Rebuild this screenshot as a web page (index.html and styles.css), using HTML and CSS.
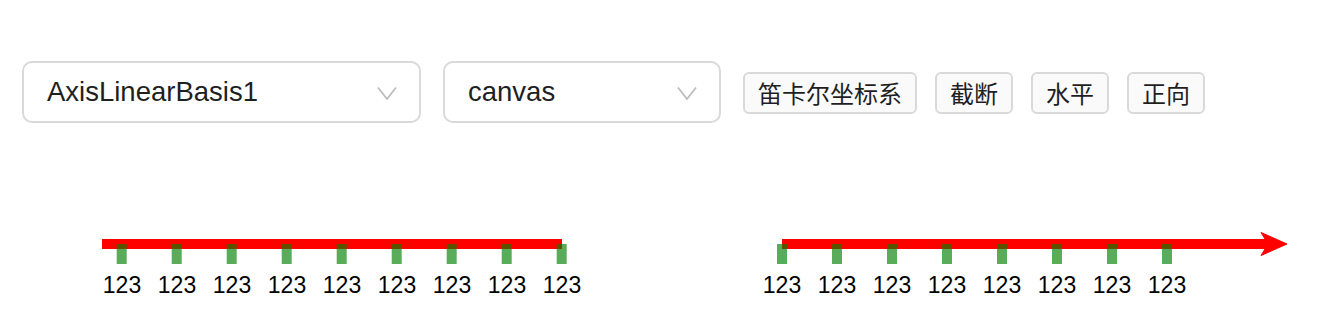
FILE: index.html
```html
<!DOCTYPE html>
<html lang="zh">
<head>
<meta charset="utf-8">
<link rel="stylesheet" href="styles.css">
</head>
<body>
<div class="toolbar">
  <div class="select select-wide">
    <span class="select-value">AxisLinearBasis1</span>
    <svg class="chevron" width="20" height="14" viewBox="0 0 20 14"><polyline points="1,1.5 10,13 19,1.5" fill="none" stroke="#bdbdbd" stroke-width="1.8"/></svg>
  </div>
  <div class="select select-narrow">
    <span class="select-value">canvas</span>
    <svg class="chevron" width="20" height="14" viewBox="0 0 20 14"><polyline points="1,1.5 10,13 19,1.5" fill="none" stroke="#bdbdbd" stroke-width="1.8"/></svg>
  </div>
  <div class="buttons">
    <button class="btn">笛卡尔坐标系</button>
    <button class="btn">截断</button>
    <button class="btn">水平</button>
    <button class="btn">正向</button>
  </div>
</div>
<svg class="axes" width="1330" height="332" viewBox="0 0 1330 332">
  <g class="axis-left">
    <rect x="102" y="239" width="460" height="10" fill="#ff0000"/>
    <g fill="#008000" fill-opacity="0.65">
      <rect x="116.7" y="244" width="10" height="20"/>
      <rect x="171.7" y="244" width="10" height="20"/>
      <rect x="226.7" y="244" width="10" height="20"/>
      <rect x="281.7" y="244" width="10" height="20"/>
      <rect x="336.7" y="244" width="10" height="20"/>
      <rect x="391.7" y="244" width="10" height="20"/>
      <rect x="446.7" y="244" width="10" height="20"/>
      <rect x="501.7" y="244" width="10" height="20"/>
      <rect x="556.7" y="244" width="10" height="20"/>
    </g>
    <g class="labels" text-anchor="middle">
      <text x="122" y="293">123</text>
      <text x="177" y="293">123</text>
      <text x="232" y="293">123</text>
      <text x="287" y="293">123</text>
      <text x="342" y="293">123</text>
      <text x="397" y="293">123</text>
      <text x="452" y="293">123</text>
      <text x="507" y="293">123</text>
      <text x="562" y="293">123</text>
    </g>
  </g>
  <g class="axis-right">
    <rect x="782" y="239" width="484" height="10" fill="#ff0000"/>
    <polygon points="1261,232.5 1287,244 1261,255.5 1265,249 1265,239" fill="#ff0000" stroke="#ff0000" stroke-width="1" stroke-linejoin="round"/>
    <g fill="#008000" fill-opacity="0.65">
      <rect x="777" y="244" width="10" height="20"/>
      <rect x="832" y="244" width="10" height="20"/>
      <rect x="887" y="244" width="10" height="20"/>
      <rect x="942" y="244" width="10" height="20"/>
      <rect x="997" y="244" width="10" height="20"/>
      <rect x="1052" y="244" width="10" height="20"/>
      <rect x="1107" y="244" width="10" height="20"/>
      <rect x="1162" y="244" width="10" height="20"/>
    </g>
    <g class="labels" text-anchor="middle">
      <text x="782" y="293">123</text>
      <text x="837" y="293">123</text>
      <text x="892" y="293">123</text>
      <text x="947" y="293">123</text>
      <text x="1002" y="293">123</text>
      <text x="1057" y="293">123</text>
      <text x="1112" y="293">123</text>
      <text x="1167" y="293">123</text>
    </g>
  </g>
</svg>
</body>
</html>
```
FILE: styles.css
```css
html, body {
  margin: 0;
  padding: 0;
  background: #ffffff;
  overflow: hidden;
}
body {
  position: relative;
  width: 1330px;
  height: 332px;
  font-family: "Liberation Sans", "Noto Sans CJK SC", Arial, sans-serif;
  color: rgba(0, 0, 0, 0.88);
}
.toolbar {
  display: flex;
  align-items: center;
  gap: 22px;
  padding: 61px 0 0 22px;
  position: relative;
  z-index: 1;
}
.select {
  box-sizing: border-box;
  height: 62px;
  border: 2px solid #d9d9d9;
  border-radius: 10px;
  display: flex;
  align-items: center;
  justify-content: space-between;
  padding: 0 22px 0 23px;
  background: #fff;
  flex: none;
}
.select-wide { width: 399px; }
.select-narrow { width: 278px; }
.select-value {
  font-size: 27.5px;
  color: #1f1f1f;
  line-height: 1;
}
.chevron { display: block; margin-top: 2px; }
.buttons {
  display: flex;
  align-items: center;
  gap: 18px;
  margin-top: 2px;
}
.btn {
  box-sizing: border-box;
  height: 42px;
  padding: 0 13px;
  border: 2px solid #d9d9d9;
  border-radius: 6px;
  background: #fafafa;
  font-family: "Noto Sans CJK SC", sans-serif;
  font-size: 24px;
  color: #1f1f1f;
  line-height: 1;
  flex: none;
}
.axes {
  position: absolute;
  left: 0;
  top: 0;
}
.labels text {
  font-family: "Liberation Sans", Arial, sans-serif;
  font-size: 23px;
  fill: #000;
}
```
